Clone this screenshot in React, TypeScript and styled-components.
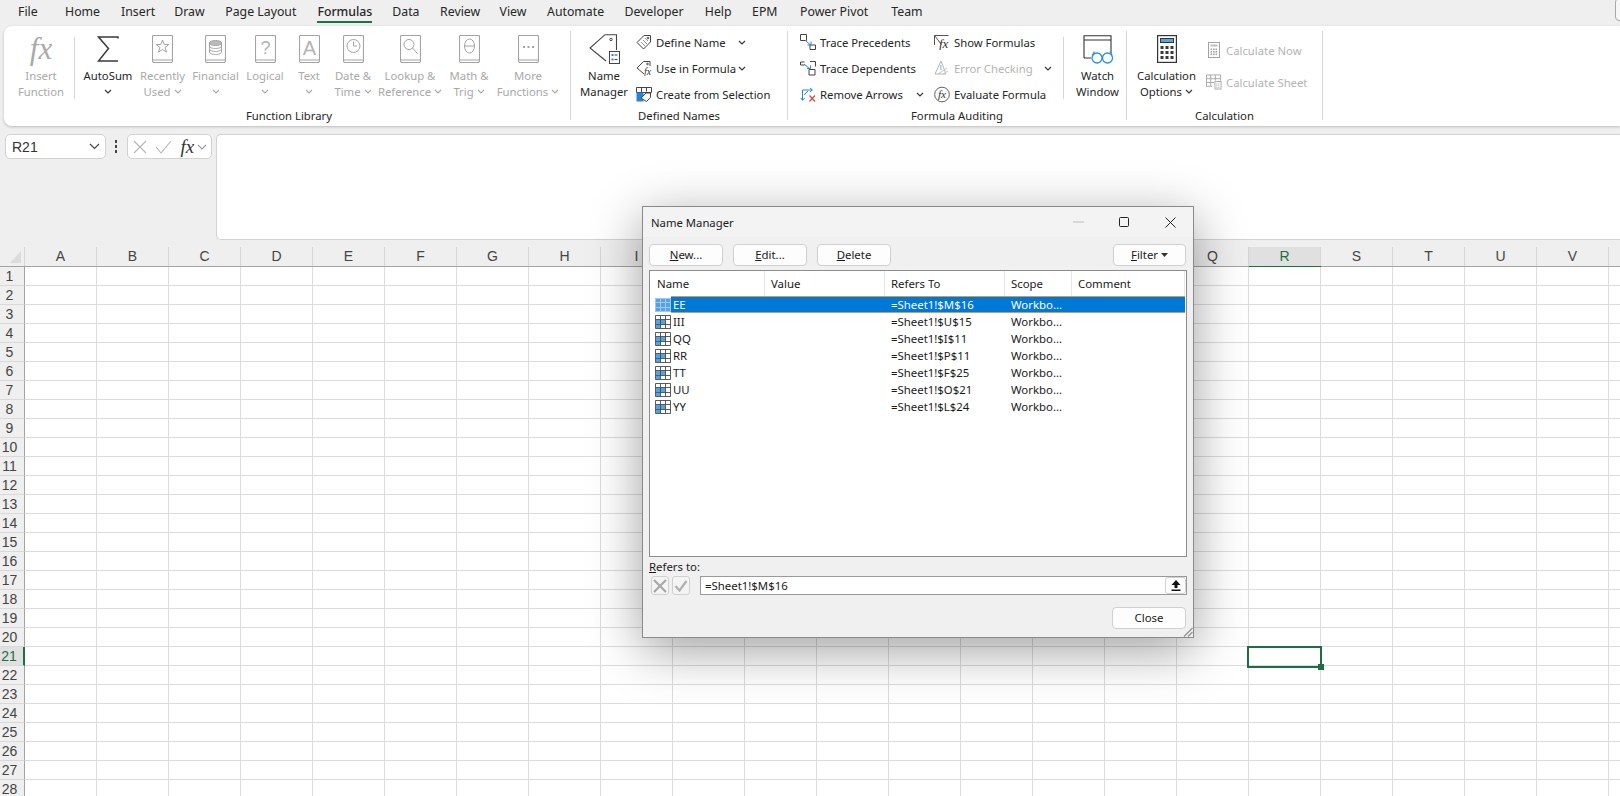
import React from "react";
import styled, { createGlobalStyle } from "styled-components";

const GlobalStyle = createGlobalStyle`
  html, body { margin: 0; padding: 0; }
  body { background: #efefef; overflow: hidden; font-family: "Noto Sans", sans-serif; }
  * { box-sizing: border-box; }
`;

const Page = styled.div`
  position: relative;
  width: 1620px;
  height: 796px;
  overflow: hidden;
  display: flex;
  flex-direction: column;
  background: #efefef;
`;

/* ---------- tabs ---------- */
const TabBar = styled.nav`
  height: 26px;
  display: flex;
  align-items: flex-start;
  padding-left: 18px;
  overflow: hidden;
`;

const Tab = styled.span<{ $active?: boolean; $gap: number }>`
  height: 23px;
  margin-right: ${(p) => p.$gap}px;
  font-size: 12.3px;
  line-height: 24px;
  color: #262626;
  white-space: nowrap;
  border-bottom: 2px solid ${(p) => (p.$active ? "#1a7342" : "transparent")};
  font-weight: ${(p) => (p.$active ? 500 : 400)};
`;

const ShareStub = styled.div`
  margin-left: auto;
  margin-right: -6px;
  margin-top: -2px;
  width: 11px;
  height: 23px;
  border: 1px solid #a8a8a8;
  border-radius: 4px;
  background: #f7f7f7;
`;

/* ---------- ribbon ---------- */
const Ribbon = styled.div`
  height: 100px;
  margin-left: 4px;
  padding-top: 5px;
  display: flex;
  align-items: flex-start;
  background: #fff;
  border-radius: 8px 0 0 8px;
  box-shadow: 0 1px 3px rgba(0, 0, 0, 0.22);
`;

const Group = styled.section<{ $w: number }>`
  width: ${(p) => p.$w}px;
  height: 89px;
  flex: none;
  display: flex;
  flex-direction: column;
  border-right: 1px solid #d6d6d6;
`;

const GroupBody = styled.div<{ $pl?: number }>`
  height: 77px;
  display: flex;
  align-items: flex-start;
  padding-left: ${(p) => p.$pl ?? 0}px;
`;

const GroupLabel = styled.div<{ $pl?: number }>`
  height: 16px;
  line-height: 16px;
  margin-bottom: -4px;
  padding-left: ${(p) => p.$pl ?? 0}px;
  font-size: 11.3px;
  color: #262626;
  text-align: center;
`;

const LargeButton = styled.div<{ $w: number; $off?: boolean }>`
  width: ${(p) => p.$w}px;
  flex: none;
  padding-top: 4px;
  display: flex;
  flex-direction: column;
  align-items: center;
  font-size: 11.3px;
  line-height: 16px;
  text-align: center;
  white-space: nowrap;
  color: ${(p) => (p.$off ? "#a9a9a9" : "#262626")};
`;

const ButtonText = styled.div`
  display: block;
`;

const IconSlot = styled.div`
  height: 28px;
  margin-bottom: 5px;
  display: flex;
  align-items: center;
  justify-content: center;
`;

const FxGlyph = styled.span`
  font-family: "Liberation Serif", serif;
  font-style: italic;
  font-size: 31px;
  line-height: 28px;
  color: #a9a9a9;
`;

const VRule = styled.div`
  width: 1px;
  height: 62px;
  margin: 6px 4px 0 0;
  flex: none;
  background: #d6d6d6;
`;

const SmallColumn = styled.div<{ $w: number; $ml?: number; $pt?: number }>`
  width: ${(p) => p.$w}px;
  flex: none;
  margin-left: ${(p) => p.$ml ?? 0}px;
  margin-top: ${(p) => (p.$pt === undefined ? -2 : 0)}px;
  padding-top: ${(p) => p.$pt ?? 0}px;
  display: flex;
  flex-direction: column;
`;

const SmallButton = styled.div<{ $off?: boolean; $h?: number }>`
  height: ${(p) => p.$h ?? 26}px;
  display: flex;
  align-items: center;
  gap: 4px;
  font-size: 11.3px;
  white-space: nowrap;
  color: ${(p) => (p.$off ? "#b4b4b4" : "#262626")};
`;

const SmallIcon = styled.div`
  width: 16px;
  height: 16px;
  flex: none;
  display: flex;
  align-items: center;
  justify-content: center;
`;

const Chev = styled.svg<{ $ml?: number }>`
  width: 8px;
  height: 5px;
  margin-left: ${(p) => p.$ml ?? 3}px;
  flex: none;
  vertical-align: 2px;
`;

function Chevron({ ml, grey }: { ml?: number; grey?: boolean }) {
  return (
    <Chev $ml={ml} viewBox="0 0 8 5">
      <path d="M1 1l3 3 3-3" fill="none" stroke={grey ? "#a9a9a9" : "#333"} strokeWidth="1.1" />
    </Chev>
  );
}

/* ---------- ribbon icons ---------- */
function Book({ children }: { children: React.ReactNode }) {
  return (
    <svg width="21" height="28" viewBox="0 0 21 28" fill="none" stroke="#a3a3a3">
      <path d="M.5 25.5V1.5a1 1 0 0 1 1-1h18a1 1 0 0 1 1 1v24a2 2 0 0 1-1 2h-18a2 2 0 0 1-1-2zM.5 25h20" strokeWidth="1.1" />
      {children}
    </svg>
  );
}

const Sigma = () => (
  <svg width="22" height="26" viewBox="0 0 22 26" fill="none" stroke="#3a3a3a" strokeWidth="1.5">
    <path d="M21 2.5V1H1.5l10 11.5L1.5 25H21" />
  </svg>
);

const NameManagerIcon = () => (
  <svg width="31" height="30" viewBox="0 0 31 30" fill="none">
    <path d="M17 27L1 14 16 .7h11.5V16" stroke="#444" strokeWidth="1.1" />
    <circle cx="22" cy="5.5" r="1.2" stroke="#444" />
    <rect x="20.5" y="17.5" width="10" height="12" fill="#fff" stroke="#444" />
    <path d="M22.5 20h2v2h-2zM22.5 24.5h2v2h-2z" fill="#2b83d6" />
    <path d="M25.5 21h3M25.5 25.5h3" stroke="#444" />
  </svg>
);

const TagHatch = () => (
  <svg width="16" height="16" viewBox="0 0 16 16" fill="none" stroke="#444">
    <path d="M1 8.5L8 1.5h6.500v6.500l-7 7z" />
    <path d="M5 8l4 4M7 6l4 4M9 4l3 3" stroke="#999" />
    <circle cx="12" cy="4" r=".8" />
  </svg>
);

const TagFx = () => (
  <svg width="16" height="16" viewBox="0 0 16 16" fill="none">
    <path d="M8 14L1 8l6.500-6.500h6.500V6" stroke="#444" />
    <circle cx="11.500" cy="4" r=".8" stroke="#444" />
    <text x="8" y="15" fontFamily="Liberation Serif, serif" fontStyle="italic" fontSize="10" fill="#333">fx</text>
  </svg>
);

const TableTag = () => (
  <svg width="16" height="16" viewBox="0 0 16 16" fill="none">
    <path d="M.5 1.5h15v5h-15z" stroke="#444" />
    <path d="M5.500 1.500v5M10.500 1.500v4" stroke="#444" />
    <rect x=".5" y="6.500" width="7" height="9" fill="#2b83d6" />
    <path d="M5 12l5-5h4.500v4.500l-4 4z" fill="#fff" stroke="#444" />
  </svg>
);

const TraceIcon = ({ flip }: { flip?: boolean }) => (
  <svg width="16" height="16" viewBox="0 0 16 16" fill="none">
    {flip ? (
      <>
        <path d="M.5 2h4M.5 2v3h4M9 9.500h6v5.500H9z" stroke="#444" />
        <path d="M4 4l6 5" stroke="#2b83d6" />
        <path d="M7 8.500h3.500V5.500" stroke="#2b83d6" />
        <path d="M10 1.500h5.500v5" stroke="#444" />
      </>
    ) : (
      <>
        <path d="M.5.500h6v6h-6zM10 11v4.500h5.500V11z" stroke="#444" />
        <path d="M5 6l5.500 5" stroke="#2b83d6" />
        <path d="M7.500 11h3.500V7.500" stroke="#2b83d6" />
      </>
    )}
  </svg>
);

const RemoveArrows = () => (
  <svg width="16" height="16" viewBox="0 0 16 16" fill="none">
    <path d="M2.500 14V4H12M10 2l2.500 2-2.500 2M.8 12l1.700 2.300L4.500 12M4 9l4-4" stroke="#2b83d6" />
    <path d="M9.500 9.500l5.500 6M15 9.500l-5.500 6" stroke="#e04343" strokeWidth="1.200" />
  </svg>
);

const ShowFormulas = () => (
  <svg width="16" height="16" viewBox="0 0 16 16" fill="none">
    <path d="M.5 11V1.500h14M.5 1.500l7 9" stroke="#555" />
    <text x="5" y="14" fontFamily="Liberation Serif, serif" fontStyle="italic" fontSize="13" fill="#333">fx</text>
  </svg>
);

const ErrorIcon = () => (
  <svg width="16" height="16" viewBox="0 0 16 16" fill="none">
    <path d="M7 1L1 14h11z" stroke="#b5b5b5" />
    <path d="M6.800 5v5" stroke="#9ccbef" strokeWidth="1.500" />
    <path d="M4 14l9-6M9 14l5-3" stroke="#c4c4c4" />
  </svg>
);

const EvaluateIcon = () => (
  <svg width="17" height="17" viewBox="0 0 17 17" fill="none">
    <circle cx="8.500" cy="8.500" r="7.800" stroke="#555" />
    <text x="4.200" y="12.500" fontFamily="Liberation Serif, serif" fontStyle="italic" fontSize="12" fill="#333">fx</text>
  </svg>
);

const WatchIcon = () => (
  <svg width="30" height="29" viewBox="0 0 30 29" fill="none">
    <path d="M1 23V.7h27V18M1 5h27M1 23h7" stroke="#333" strokeWidth="1.100" />
    <circle cx="14" cy="23" r="5" stroke="#2b90de" strokeWidth="1.300" fill="#fff" />
    <circle cx="24.500" cy="23" r="5" stroke="#2b90de" strokeWidth="1.300" fill="#fff" />
    <path d="M19 22.500h.500M9.500 20l2-3.500M29 20l-2-3.500" stroke="#2b90de" strokeWidth="1.300" />
  </svg>
);

const CalcLarge = () => (
  <svg width="20" height="28" viewBox="0 0 20 28" fill="none">
    <rect x=".6" y=".6" width="18.800" height="26.800" stroke="#333" strokeWidth="1.200" />
    <rect x="3.500" y="3.500" width="13" height="4" fill="#57a5e4" stroke="#333" />
    {[11, 16, 21].map((y) =>
      [3.5, 8.5, 13.5].map((x) => <rect key={`${x}-${y}`} x={x} y={y} width="3" height="3" fill="#3a3a3a" />)
    )}
  </svg>
);

const CalcSmall = () => (
  <svg width="13" height="16" viewBox="0 0 13 16" fill="none">
    <rect x=".5" y=".5" width="11" height="15" stroke="#a3a3a3" />
    <rect x="2.500" y="2.500" width="7" height="2" fill="#bdbdbd" />
    {[6.5, 9, 11.5].map((y) =>
      [2.5, 5, 7.5].map((x) => <rect key={`${x}-${y}`} x={x} y={y} width="1.600" height="1.600" fill="#a3a3a3" />)
    )}
  </svg>
);

const CalcSheet = () => (
  <svg width="17" height="16" viewBox="0 0 17 16" fill="none" stroke="#a8a8a8">
    <path d="M.5 13V.5h15v6M.5 4.500h15M.5 8.500h8M.5 12.500h6M5 .5v12M10 .5v6" />
    <rect x="9.500" y="7.500" width="6.500" height="8" fill="#fff" />
    <path d="M11 10h3.500M11 12h3.500M11 14h3.500" strokeDasharray="1 .6" />
  </svg>
);

/* ---------- formula bar ---------- */
const FormulaRow = styled.div`
  height: 121px;
  padding: 8px 0 0 4.500px;
  display: flex;
  align-items: flex-start;
`;

const RoundBox = styled.div<{ $w?: number }>`
  width: ${(p) => (p.$w ? `${p.$w}px` : "auto")};
  height: 25px;
  flex: none;
  display: flex;
  align-items: center;
  background: #fff;
  border: 1px solid #d2d2d2;
  border-radius: 5px;
`;

const NameText = styled.span`
  flex: 1;
  padding-left: 6.500px;
  font-family: "Liberation Sans", Arial, sans-serif;
  font-size: 14px;
  color: #333;
`;

const Dots = styled.div`
  width: 21px;
  height: 25px;
  flex: none;
  display: flex;
  flex-direction: column;
  align-items: center;
  justify-content: center;
  gap: 2.500px;
  span {
    width: 2.500px;
    height: 2.500px;
    background: #444;
  }
`;

const FormulaInput = styled.div`
  flex: 1;
  height: 105.500px;
  margin-left: 4px;
  background: #fff;
  border: 1px solid #d2d2d2;
  border-right: none;
  border-radius: 5px 0 0 5px;
`;

const FxSmall = styled.span`
  font-family: "Liberation Serif", serif;
  font-style: italic;
  font-size: 19px;
  line-height: 22px;
  margin: 0 3px 0 9px;
  color: #333;
`;

/* ---------- sheet ---------- */
const Sheet = styled.div`
  flex: 1;
  overflow: hidden;
  font-family: "Liberation Sans", Arial, sans-serif;
  font-size: 14px;
  color: #444;
`;

const HeaderRow = styled.div`
  height: 19.500px;
  display: flex;
  border-bottom: 1.500px solid #a3a3a3;
`;

const Corner = styled.div`
  width: 25px;
  height: 100%;
  flex: none;
  padding: 3px 0 0 10px;
  border-right: 1px solid #d6d6d6;
`;

const ColHead = styled.div<{ $sel?: boolean }>`
  width: 72px;
  flex: none;
  text-align: center;
  line-height: 18px;
  border-right: 1px solid #d6d6d6;
  background: ${(p) => (p.$sel ? "#e0e0e0" : "transparent")};
  color: ${(p) => (p.$sel ? "#1d6f42" : "#444")};
  box-shadow: ${(p) => (p.$sel ? "0 1.500px 0 #1d6f42" : "none")};
  position: relative;
`;

const Row = styled.div`
  height: 19px;
  display: flex;
`;

const RowHead = styled.div<{ $sel?: boolean }>`
  width: 25px;
  flex: none;
  padding-right: 5px;
  line-height: 18px;
  text-align: center;
  border-bottom: 1px solid #d9d9d9;
  border-right: ${(p) => (p.$sel ? "2px solid #1d6f42" : "1.500px solid #a3a3a3")};
  background: ${(p) => (p.$sel ? "#e0e0e0" : "#efefef")};
  color: ${(p) => (p.$sel ? "#1d6f42" : "#444")};
`;

const Cells = styled.div<{ $active?: boolean }>`
  position: relative;
  z-index: ${(p) => (p.$active ? 1 : 0)};
  flex: 1;
  background-color: #fff;
  background-image: linear-gradient(to right, transparent 71px, #dcdcdc 71px);
  background-size: 72px 100%;
  border-bottom: 1px solid #dcdcdc;
`;

const ActiveCell = styled.div`
  position: absolute;
  left: 1222px;
  top: -1px;
  width: 75px;
  height: 22px;
  border: 2px solid #1d6f42;
  &::after {
    content: "";
    position: absolute;
    right: -4px;
    bottom: -4px;
    width: 6px;
    height: 6px;
    background: #1d6f42;
  }
`;

/* ---------- dialog ---------- */
const Dialog = styled.div`
  position: absolute;
  z-index: 2;
  left: 642px;
  top: 206px;
  width: 552px;
  height: 432px;
  display: flex;
  flex-direction: column;
  background: #f0f0f0;
  border: 1px solid #8a8a8a;
  box-shadow: 0 12px 48px rgba(0, 0, 0, 0.38);
  font-size: 11.400px;
  color: #1a1a1a;
`;

const TitleBar = styled.div`
  height: 30px;
  flex: none;
  display: flex;
  align-items: center;
  padding-left: 8px;
  background: #f3f3f3;
  font-size: 11.300px;
`;

const WinControls = styled.div`
  margin-left: auto;
  display: flex;
  align-items: center;
`;

const WinButton = styled.div`
  width: 46px;
  height: 30px;
  display: flex;
  align-items: center;
  justify-content: center;
`;

const Toolbar = styled.div`
  height: 33px;
  flex: none;
  padding: 7px 7px 0 6px;
  display: flex;
  align-items: flex-start;
  gap: 10px;
`;

const DlgButton = styled.div<{ $w?: number; $push?: boolean }>`
  width: ${(p) => p.$w ?? 74}px;
  height: 22px;
  flex: none;
  margin-left: ${(p) => (p.$push ? "auto" : "0")};
  display: flex;
  align-items: center;
  justify-content: center;
  background: #fdfdfd;
  border: 1px solid #d0d0d0;
  border-radius: 4px;
  line-height: 1;
`;

const List = styled.div`
  flex: none;
  height: 287px;
  margin: 0 6px 0 6px;
  background: #fff;
  border: 1px solid #8c8c8c;
  display: flex;
  flex-direction: column;
`;

const ListHeader = styled.div`
  height: 25px;
  flex: none;
  display: grid;
  grid-template-columns: 115px 120px 120px 67px 113px;
`;

const HeadCell = styled.div`
  padding-left: 6px;
  line-height: 25px;
  color: #1a1a1a;
  border-right: 1px solid #e6e6e6;
  &:first-child {
    padding-left: 7px;
  }
`;

const ListRow = styled.div`
  height: 17px;
  display: grid;
  grid-template-columns: 115px 120px 120px 67px 113px;
  align-items: center;
  line-height: 17px;
`;

const NameCell = styled.div<{ $sel?: boolean }>`
  display: flex;
  align-items: center;
  padding-left: 5px;
  height: 17px;
  color: ${(p) => (p.$sel ? "#fff" : "#1a1a1a")};
  > span {
    flex: 1;
    height: 17px;
    padding-left: 2px;
    background: ${(p) => (p.$sel ? "#0078d7" : "transparent")};
    box-shadow: ${(p) => (p.$sel ? "inset 0 1px 0 #d99a45, inset 0 -1px 0 #d99a45" : "none")};
  }
`;

const BodyCell = styled.div<{ $sel?: boolean }>`
  padding-left: 6px;
  height: 17px;
  white-space: nowrap;
  color: ${(p) => (p.$sel ? "#fff" : "#1a1a1a")};
  background: ${(p) => (p.$sel ? "#0078d7" : "transparent")};
  box-shadow: ${(p) => (p.$sel ? "inset 0 1px 0 #d99a45, inset 0 -1px 0 #d99a45" : "none")};
`;

const RefersLabel = styled.div`
  height: 19px;
  flex: none;
  padding: 2px 0 0 6px;
  line-height: 16px;
`;

const RefersRow = styled.div`
  height: 19px;
  flex: none;
  margin: 0 6px 0 8px;
  display: flex;
  gap: 3px;
`;

const SquareButton = styled.div`
  width: 18px;
  height: 19px;
  flex: none;
  display: flex;
  align-items: center;
  justify-content: center;
  background: #f4f4f4;
  border: 1px solid #d0d0d0;
  border-radius: 3px;
`;

const RefersInput = styled.div`
  flex: 1;
  margin-left: 7px;
  padding-left: 4px;
  display: flex;
  align-items: center;
  justify-content: space-between;
  background: #fff;
  border: 1px solid #9a9a9a;
`;

const UpButton = styled.div`
  width: 21px;
  height: 17px;
  display: flex;
  align-items: center;
  justify-content: center;
  background: #fdfdfd;
  border: 1px solid #d0d0d0;
  border-radius: 3px;
`;

const Footer = styled.div`
  flex: 1;
  padding: 12px 7px 0 0;
  display: flex;
  justify-content: flex-end;
  align-items: flex-start;
`;

const Grip = styled.svg`
  position: absolute;
  right: 0;
  bottom: 0;
  width: 12px;
  height: 12px;
`;

const columns = "ABCDEFGHIJKLMNOPQRSTUV".split("");
const rows = Array.from({ length: 28 }, (_, i) => i + 1);
const names: [string, string][] = [
  ["EE", "=Sheet1!$M$16"],
  ["III", "=Sheet1!$U$15"],
  ["QQ", "=Sheet1!$I$11"],
  ["RR", "=Sheet1!$P$11"],
  ["TT", "=Sheet1!$F$25"],
  ["UU", "=Sheet1!$O$21"],
  ["YY", "=Sheet1!$L$24"],
];

const tabs: [string, number][] = [
  ["File", 27.4],
  ["Home", 21],
  ["Insert", 19],
  ["Draw", 20.7],
  ["Page Layout", 21],
  ["Formulas", 20],
  ["Data", 20.6],
  ["Review", 19.3],
  ["View", 20.6],
  ["Automate", 20.3],
  ["Developer", 21.3],
  ["Help", 20.5],
  ["EPM", 22.5],
  ["Power Pivot", 23],
  ["Team", 0],
];

function NameIcon({ sel }: { sel?: boolean }) {
  const line = sel ? "#a9cdf0" : "#4a4a4a";
  return (
    <svg width="16" height="14" viewBox="0 0 16 14" fill="none" style={{ flex: "none" }}>
      <rect x="0" y="0" width="16" height="14" fill={sel ? "#5aa4e6" : "#fff"} />
      <rect x="1" y="5" width="9" height="4" fill="#4fa3ea" />
      <rect x="1" y="10" width="4" height="3" fill="#4fa3ea" />
      <path d="M.5.5h15v13H.5zM5.500.5v13M10.500.5v13M.5 4.500h15M.5 9.500h15" stroke={line} strokeWidth=".9" />
    </svg>
  );
}

export default function App() {
  return (
    <Page>
      <GlobalStyle />
      <TabBar>
        {tabs.map(([t, gap]) => (
          <Tab key={t} $gap={gap} $active={t === "Formulas"}>
            {t}
          </Tab>
        ))}
        <ShareStub />
      </TabBar>

      <Ribbon>
        <Group $w={567}>
          <GroupBody $pl={4}>
            <LargeButton $w={66} $off>
              <IconSlot>
                <FxGlyph>fx</FxGlyph>
              </IconSlot>
              <ButtonText>Insert</ButtonText>
              <ButtonText>Function</ButtonText>
            </LargeButton>
            <VRule />
            <LargeButton $w={58}>
              <IconSlot>
                <Sigma />
              </IconSlot>
              <ButtonText>AutoSum</ButtonText>
              <ButtonText>
                <Chevron ml={0} />
              </ButtonText>
            </LargeButton>
            <LargeButton $w={51} $off>
              <IconSlot>
                <Book>
                  <path d="M10.500 5l1.700 4.500h4.600l-3.700 3 1.400 4.700-4-2.800-4 2.800 1.400-4.700-3.700-3h4.600z" />
                </Book>
              </IconSlot>
              <ButtonText>Recently</ButtonText>
              <ButtonText>
                Used
                <Chevron grey />
              </ButtonText>
            </LargeButton>
            <LargeButton $w={55} $off>
              <IconSlot>
                <Book>
                  <ellipse cx="10.500" cy="8" rx="6" ry="2.500" fill="#bbb" />
                  <path d="M4.500 8v9c0 1.400 2.700 2.500 6 2.500s6-1.100 6-2.500V8M4.500 11c0 1.400 2.700 2.500 6 2.500s6-1.100 6-2.500M4.500 14c0 1.400 2.700 2.500 6 2.500s6-1.100 6-2.500" />
                </Book>
              </IconSlot>
              <ButtonText>Financial</ButtonText>
              <ButtonText>
                <Chevron ml={0} grey />
              </ButtonText>
            </LargeButton>
            <LargeButton $w={44} $off>
              <IconSlot>
                <Book>
                  <text x="10.500" y="19" textAnchor="middle" fontFamily="Liberation Sans, sans-serif" fontSize="18" fill="#b3b3b3" stroke="none">?</text>
                </Book>
              </IconSlot>
              <ButtonText>Logical</ButtonText>
              <ButtonText>
                <Chevron ml={0} grey />
              </ButtonText>
            </LargeButton>
            <LargeButton $w={44} $off>
              <IconSlot>
                <Book>
                  <text x="10.500" y="20" textAnchor="middle" fontFamily="Liberation Sans, sans-serif" fontSize="20" fill="#b3b3b3" stroke="none">A</text>
                </Book>
              </IconSlot>
              <ButtonText>Text</ButtonText>
              <ButtonText>
                <Chevron ml={0} grey />
              </ButtonText>
            </LargeButton>
            <LargeButton $w={44} $off>
              <IconSlot>
                <Book>
                  <circle cx="10.500" cy="11" r="6.500" />
                  <path d="M10.500 6.500V11h3.500" />
                </Book>
              </IconSlot>
              <ButtonText>Date &amp;</ButtonText>
              <ButtonText>
                Time
                <Chevron grey />
              </ButtonText>
            </LargeButton>
            <LargeButton $w={70} $off>
              <IconSlot>
                <Book>
                  <circle cx="9" cy="9.500" r="5" />
                  <path d="M12.500 13l5 5.500" />
                </Book>
              </IconSlot>
              <ButtonText>Lookup &amp;</ButtonText>
              <ButtonText>
                Reference
                <Chevron grey />
              </ButtonText>
            </LargeButton>
            <LargeButton $w={48} $off>
              <IconSlot>
                <Book>
                  <ellipse cx="10.500" cy="11" rx="5" ry="7" />
                  <path d="M5.500 11h10" />
                </Book>
              </IconSlot>
              <ButtonText>Math &amp;</ButtonText>
              <ButtonText>
                Trig
                <Chevron grey />
              </ButtonText>
            </LargeButton>
            <LargeButton $w={70} $off>
              <IconSlot>
                <Book>
                  <path d="M5 12h2M9.500 12h2M14 12h2" strokeWidth="2" />
                </Book>
              </IconSlot>
              <ButtonText>More</ButtonText>
              <ButtonText>
                Functions
                <Chevron grey />
              </ButtonText>
            </LargeButton>
          </GroupBody>
          <GroupLabel $pl={4}>Function Library</GroupLabel>
        </Group>

        <Group $w={217}>
          <GroupBody>
            <LargeButton $w={66}>
              <IconSlot>
                <NameManagerIcon />
              </IconSlot>
              <ButtonText>Name</ButtonText>
              <ButtonText>Manager</ButtonText>
            </LargeButton>
            <SmallColumn $w={146} $ml={-1}>
              <SmallButton>
                <SmallIcon>
                  <TagHatch />
                </SmallIcon>
                Define Name
                <Chevron ml={8} />
              </SmallButton>
              <SmallButton>
                <SmallIcon>
                  <TagFx />
                </SmallIcon>
                Use in Formula
                <Chevron ml={-2} />
              </SmallButton>
              <SmallButton>
                <SmallIcon>
                  <TableTag />
                </SmallIcon>
                Create from Selection
              </SmallButton>
            </SmallColumn>
          </GroupBody>
          <GroupLabel>Defined Names</GroupLabel>
        </Group>

        <Group $w={339}>
          <GroupBody $pl={12}>
            <SmallColumn $w={134}>
              <SmallButton>
                <SmallIcon>
                  <TraceIcon />
                </SmallIcon>
                Trace Precedents
              </SmallButton>
              <SmallButton>
                <SmallIcon>
                  <TraceIcon flip />
                </SmallIcon>
                Trace Dependents
              </SmallButton>
              <SmallButton>
                <SmallIcon>
                  <RemoveArrows />
                </SmallIcon>
                Remove Arrows
                <Chevron ml={9} />
              </SmallButton>
            </SmallColumn>
            <SmallColumn $w={129}>
              <SmallButton>
                <SmallIcon>
                  <ShowFormulas />
                </SmallIcon>
                Show Formulas
              </SmallButton>
              <SmallButton $off>
                <SmallIcon>
                  <ErrorIcon />
                </SmallIcon>
                Error Checking
                <Chevron ml={7} />
              </SmallButton>
              <SmallButton>
                <SmallIcon>
                  <EvaluateIcon />
                </SmallIcon>
                Evaluate Formula
              </SmallButton>
            </SmallColumn>
            <VRule />
            <LargeButton $w={59}>
              <IconSlot>
                <WatchIcon />
              </IconSlot>
              <ButtonText>Watch</ButtonText>
              <ButtonText>Window</ButtonText>
            </LargeButton>
          </GroupBody>
          <GroupLabel>Formula Auditing</GroupLabel>
        </Group>

        <Group $w={196}>
          <GroupBody>
            <LargeButton $w={79}>
              <IconSlot>
                <CalcLarge />
              </IconSlot>
              <ButtonText>Calculation</ButtonText>
              <ButtonText>
                Options
                <Chevron />
              </ButtonText>
            </LargeButton>
            <SmallColumn $w={110} $pt={3}>
              <SmallButton $off $h={32}>
                <SmallIcon>
                  <CalcSmall />
                </SmallIcon>
                Calculate Now
              </SmallButton>
              <SmallButton $off $h={32}>
                <SmallIcon>
                  <CalcSheet />
                </SmallIcon>
                Calculate Sheet
              </SmallButton>
            </SmallColumn>
          </GroupBody>
          <GroupLabel>Calculation</GroupLabel>
        </Group>
      </Ribbon>

      <FormulaRow>
        <RoundBox $w={101}>
          <NameText>R21</NameText>
          <svg width="11" height="7" viewBox="0 0 11 7" style={{ marginRight: 5 }}>
            <path d="M1 1l4.500 4.500L10 1" fill="none" stroke="#444" strokeWidth="1.200" />
          </svg>
        </RoundBox>
        <Dots>
          <span />
          <span />
          <span />
        </Dots>
        <RoundBox $w={85}>
          <svg width="14" height="14" viewBox="0 0 14 14" style={{ marginLeft: 5 }}>
            <path d="M1 1l12 12M13 1L1 13" fill="none" stroke="#b5b5b5" strokeWidth="1.100" />
          </svg>
          <svg width="17" height="14" viewBox="0 0 17 14" style={{ marginLeft: 8 }}>
            <path d="M1 7l5 6L16 1" fill="none" stroke="#b5b5b5" strokeWidth="1.100" />
          </svg>
          <FxSmall>fx</FxSmall>
          <svg width="10" height="6" viewBox="0 0 10 6">
            <path d="M1 1l4 4 4-4" fill="none" stroke="#999" strokeWidth="1.100" />
          </svg>
        </RoundBox>
        <FormulaInput />
      </FormulaRow>

      <Sheet>
        <HeaderRow>
          <Corner>
            <svg width="11" height="12" viewBox="0 0 11 12">
              <path d="M11 0v12H0z" fill="#dcdcdc" />
            </svg>
          </Corner>
          {columns.map((c) => (
            <ColHead key={c} $sel={c === "R"}>
              {c}
            </ColHead>
          ))}
        </HeaderRow>
        {rows.map((r) => (
          <Row key={r}>
            <RowHead $sel={r === 21}>{r}</RowHead>
            <Cells $active={r === 21}>{r === 21 && <ActiveCell />}</Cells>
          </Row>
        ))}
      </Sheet>

      <Dialog>
        <TitleBar>
          Name Manager
          <WinControls>
            <WinButton>
              <svg width="11" height="2" viewBox="0 0 11 2">
                <path d="M0 1h11" stroke="#bdbdbd" />
              </svg>
            </WinButton>
            <WinButton>
              <svg width="10" height="10" viewBox="0 0 10 10">
                <rect x=".5" y=".5" width="9" height="9" rx="1" fill="none" stroke="#222" />
              </svg>
            </WinButton>
            <WinButton>
              <svg width="11" height="11" viewBox="0 0 11 11">
                <path d="M.5.5l10 10M10.500.5l-10 10" stroke="#222" />
              </svg>
            </WinButton>
          </WinControls>
        </TitleBar>
        <Toolbar>
          <DlgButton>
            <span>
              <u>N</u>ew...
            </span>
          </DlgButton>
          <DlgButton>
            <span>
              <u>E</u>dit...
            </span>
          </DlgButton>
          <DlgButton>
            <span>
              <u>D</u>elete
            </span>
          </DlgButton>
          <DlgButton $w={73} $push>
            <span>
              <u>F</u>ilter
            </span>
            <svg width="7" height="4" viewBox="0 0 7 4" style={{ marginLeft: 3 }}>
              <path d="M0 0h7L3.500 4z" fill="#333" />
            </svg>
          </DlgButton>
        </Toolbar>
        <List>
          <ListHeader>
            <HeadCell>Name</HeadCell>
            <HeadCell>Value</HeadCell>
            <HeadCell>Refers To</HeadCell>
            <HeadCell>Scope</HeadCell>
            <HeadCell>Comment</HeadCell>
          </ListHeader>
          {names.map(([n, ref], i) => (
            <ListRow key={n}>
              <NameCell $sel={i === 0}>
                <NameIcon sel={i === 0} />
                <span>{n}</span>
              </NameCell>
              <BodyCell $sel={i === 0} />
              <BodyCell $sel={i === 0}>{ref}</BodyCell>
              <BodyCell $sel={i === 0}>Workbo...</BodyCell>
              <BodyCell $sel={i === 0} />
            </ListRow>
          ))}
        </List>
        <RefersLabel>
          <u>R</u>efers to:
        </RefersLabel>
        <RefersRow>
          <SquareButton>
            <svg width="14" height="14" viewBox="0 0 14 14">
              <path d="M1 1l12 12M13 1L1 13" stroke="#a8a8a8" strokeWidth="2.200" />
            </svg>
          </SquareButton>
          <SquareButton>
            <svg width="14" height="12" viewBox="0 0 14 12">
              <path d="M1.500 6l4 4.500L12.500 1" fill="none" stroke="#b0b0b0" strokeWidth="2.200" />
            </svg>
          </SquareButton>
          <RefersInput>
            =Sheet1!$M$16
            <UpButton>
              <svg width="10" height="11" viewBox="0 0 10 11">
                <path d="M5 0l4.500 5H6.500v3h-3V5H.5zM.5 9.500h9V11h-9z" fill="#111" />
              </svg>
            </UpButton>
          </RefersInput>
        </RefersRow>
        <Footer>
          <DlgButton>Close</DlgButton>
        </Footer>
        <Grip viewBox="0 0 12 12">
          <path d="M11.500 3L3 11.500M11.500 7L7 11.500" stroke="#8f8f8f" strokeWidth="1.200" />
        </Grip>
      </Dialog>
    </Page>
  );
}
